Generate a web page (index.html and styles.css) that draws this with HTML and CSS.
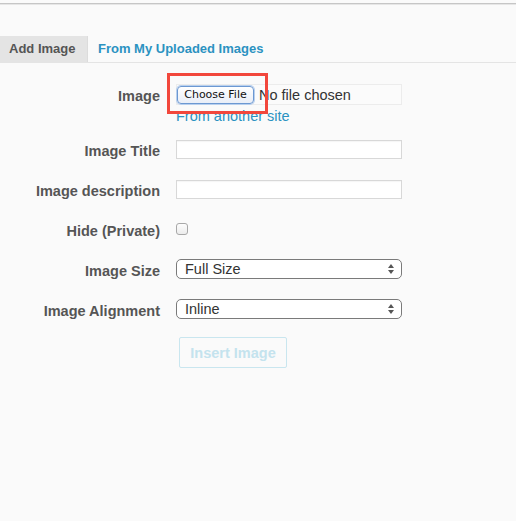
FILE: index.html
```html
<!DOCTYPE html>
<html>
<head>
<meta charset="utf-8">
<link rel="stylesheet" href="styles.css">
</head>
<body>
<div class="topbar"></div>
<div class="tabs">
  <div class="tab active">Add Image</div>
  <div class="tab link">From My Uploaded Images</div>
</div>
<form class="form">
  <div class="row row-image">
    <label class="label">Image</label>
    <div class="field">
      <div class="filebox">
        <span class="choose">Choose File</span>
        <span class="nofile">No file chosen</span>
      </div>
      <a class="another">From another site</a>
      <span class="highlight"></span>
    </div>
  </div>
  <div class="row">
    <label class="label">Image Title</label>
    <div class="field"><input class="text" type="text"></div>
  </div>
  <div class="row">
    <label class="label">Image description</label>
    <div class="field"><input class="text" type="text"></div>
  </div>
  <div class="row">
    <label class="label">Hide (Private)</label>
    <div class="field"><span class="checkbox"></span></div>
  </div>
  <div class="row">
    <label class="label">Image Size</label>
    <div class="field">
      <div class="select">
        <span class="select-text">Full Size</span>
        <svg class="arrows" width="8" height="12" viewBox="0 0 8 12"><path d="M4 1 L7 5 L1 5 Z M4 11 L7 7 L1 7 Z" fill="#555"/></svg>
      </div>
    </div>
  </div>
  <div class="row">
    <label class="label">Image Alignment</label>
    <div class="field">
      <div class="select">
        <span class="select-text">Inline</span>
        <svg class="arrows" width="8" height="12" viewBox="0 0 8 12"><path d="M4 1 L7 5 L1 5 Z M4 11 L7 7 L1 7 Z" fill="#555"/></svg>
      </div>
    </div>
  </div>
  <div class="row row-btn">
    <span class="label"></span>
    <div class="field"><button type="button" class="insert">Insert Image</button></div>
  </div>
</form>
</body>
</html>
```
FILE: styles.css
```css
html, body {
  margin: 0;
  padding: 0;
  background: #fafafa;
  font-family: "Liberation Sans", Arial, sans-serif;
}
.topbar {
  height: 3px;
  border-bottom: 1px solid #c6c6c6;
  box-shadow: 0 1px 0 #e6e6e6;
}
.tabs {
  display: flex;
  margin-top: 32px;
  height: 26px;
  border-bottom: 1px solid #e4e4e4;
}
.tab {
  font-size: 13px;
  font-weight: bold;
  line-height: 26px;
}
.tab.active {
  width: 78px;
  padding-left: 9px;
  background: #e4e4e4;
  color: #555;
  border-right: 1px solid #dcdcdc;
  box-sizing: content-box;
}
.tab.link {
  color: #2b92c1;
  padding-left: 10px;
}
.form {
  margin: 21px 0 0 0;
}
.row {
  display: flex;
  align-items: center;
  column-gap: 16px;
  height: 20px;
  margin-bottom: 20px;
}
.row-image {
  height: auto;
  align-items: flex-start;
  margin-bottom: 14px;
}
.label {
  width: 160px;
  flex: none;
  text-align: right;
  font-size: 14.5px;
  font-weight: bold;
  color: #555;
  line-height: 20px;
  padding-top: 3px;
}
.row-image .label {
  line-height: 21px;
  padding-top: 2px;
}
.field {
  position: relative;
  width: 226px;
  flex: none;
}
.filebox {
  height: 19px;
  border: 1px solid #ececec;
  background: #fbfbfb;
  display: flex;
  align-items: center;
}
.choose {
  box-sizing: border-box;
  width: 77px;
  height: 18px;
  border: 1px solid #6c98d2;
  border-radius: 4px;
  box-shadow: 0 0 0 1px #b9d0ee;
  background: linear-gradient(#ffffff, #e9eef7);
  font-family: "DejaVu Sans", sans-serif;
  font-size: 11px;
  line-height: 16px;
  color: #111;
  text-align: center;
}
.nofile {
  margin-left: 5px;
  font-size: 14.5px;
  color: #333;
}
.highlight {
  position: absolute;
  left: -9px;
  top: -11px;
  width: 95px;
  height: 35px;
  border: 3px solid #f2473c;
}
.another {
  display: block;
  margin-top: 2px;
  font-size: 14.5px;
  line-height: 18px;
  color: #2b92c1;
}
.text {
  box-sizing: border-box;
  display: block;
  width: 226px;
  height: 19px;
  margin: 0;
  border: 1px solid #d8d8d8;
  background: #fff;
  box-shadow: inset 0 1px 1px rgba(0,0,0,0.04);
  outline: none;
}
.checkbox {
  display: block;
  box-sizing: border-box;
  width: 12px;
  height: 12px;
  border: 1px solid #a8a8a8;
  border-radius: 3px;
  background: linear-gradient(#fdfdfd, #ececec);
}
.select {
  box-sizing: border-box;
  height: 20px;
  border: 1px solid #7a7a7a;
  border-radius: 5px;
  background: #fff;
  display: flex;
  align-items: center;
  justify-content: space-between;
  padding: 0 6px 0 8px;
}
.select-text {
  font-size: 14.5px;
  color: #333;
  line-height: 18px;
}
.arrows {
  display: block;
}
.row-btn {
  height: 31px;
  margin-top: -2px;
}
.insert {
  margin-left: 3px;
  box-sizing: border-box;
  width: 108px;
  height: 31px;
  border: 1px solid #c9e6ef;
  border-radius: 2px;
  background: #fafafa;
  color: #c4e3ee;
  font-family: "Liberation Sans", Arial, sans-serif;
  font-size: 14.5px;
  font-weight: bold;
  padding: 0;
}
```
